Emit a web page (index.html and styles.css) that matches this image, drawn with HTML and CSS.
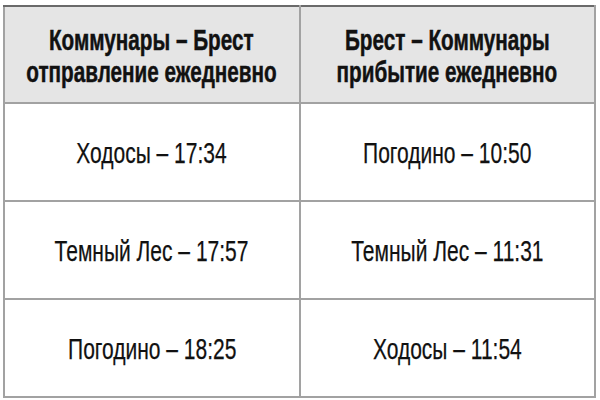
FILE: index.html
```html
<!DOCTYPE html>
<html lang="ru">
<head>
<meta charset="utf-8">
<link rel="stylesheet" href="styles.css">
</head>
<body>
<table class="schedule">
  <thead>
    <tr>
      <th><div class="head"><span class="line">Коммунары – Брест</span><span class="line">отправление ежедневно</span></div></th>
      <th><div class="head"><span class="line">Брест – Коммунары</span><span class="line">прибытие ежедневно</span></div></th>
    </tr>
  </thead>
  <tbody>
    <tr><td><div class="cell"><span class="line">Ходосы – 17:34</span></div></td><td><div class="cell"><span class="line">Погодино – 10:50</span></div></td></tr>
    <tr><td><div class="cell"><span class="line">Темный Лес – 17:57</span></div></td><td><div class="cell"><span class="line">Темный Лес – 11:31</span></div></td></tr>
    <tr><td><div class="cell"><span class="line">Погодино – 18:25</span></div></td><td><div class="cell"><span class="line">Ходосы – 11:54</span></div></td></tr>
  </tbody>
</table>
</body>
</html>
```
FILE: styles.css
```css
html, body {
  margin: 0;
  padding: 0;
  background: #ffffff;
}
body {
  padding: 5px 4px 0 3px;
  font-family: "Liberation Sans", Arial, sans-serif;
  color: #111;
}
.schedule {
  width: 593px;
  border-collapse: collapse;
  table-layout: fixed;
}
.schedule th,
.schedule td {
  border: 2px solid #a2a2a2;
  padding: 0;
  vertical-align: middle;
}
.schedule th {
  background: #e5e5e5;
  height: 95px;
  border-top-color: #6a6a6a;
}
.schedule td {
  height: 96px;
}
.head,
.cell {
  display: flex;
  flex-direction: column;
  align-items: center;
  justify-content: center;
}
.line {
  display: block;
  white-space: nowrap;
  transform: scaleX(0.7);
}
.head {
  font-size: 30px;
  font-weight: bold;
  line-height: 32px;
  padding-top: 2px;
  -webkit-text-stroke: 0.5px #111;
}
.head .line {
  transform: scaleX(0.69);
}
.cell {
  font-size: 30px;
  font-weight: normal;
  line-height: 34px;
  padding-top: 2px;
  -webkit-text-stroke: 0.25px #111;
}
```
